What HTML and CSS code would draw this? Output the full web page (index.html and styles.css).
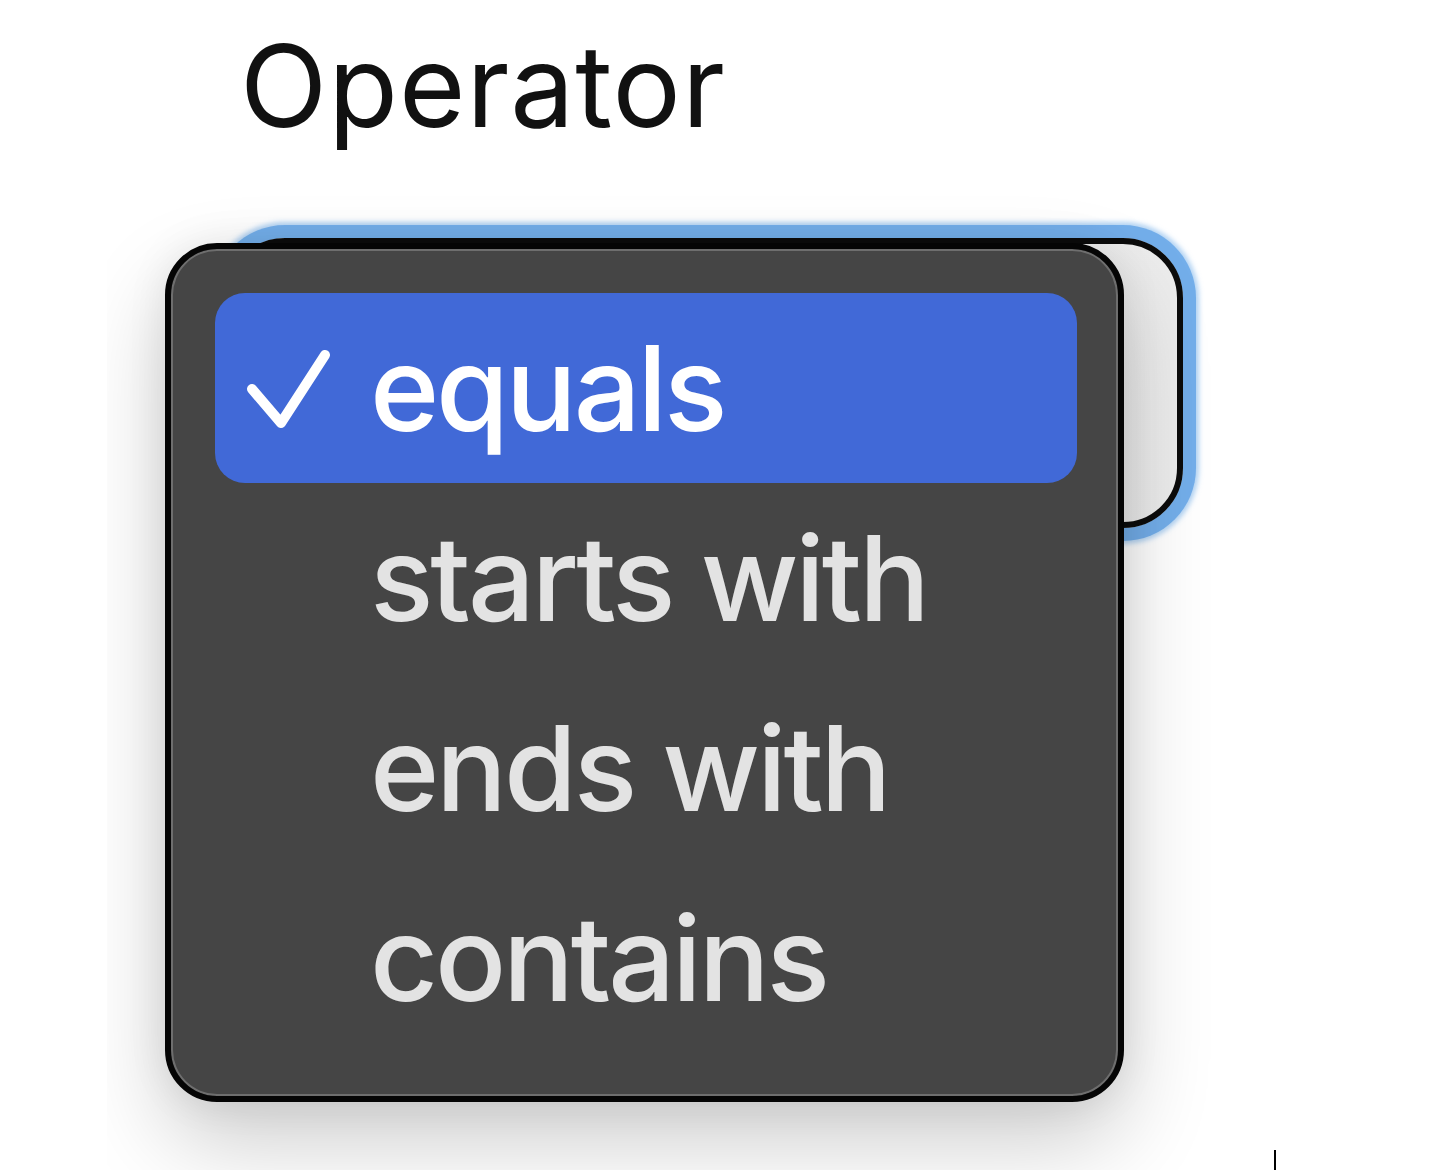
FILE: index.html
```html
<!DOCTYPE html>
<html lang="en">
<head>
  <meta charset="UTF-8">
  <meta name="viewport" content="width=device-width, initial-scale=1.0">
  <title>Operator</title>
  <link rel="stylesheet" href="styles.css">
</head>
<body>
  <div class="frame">
    <label class="label" for="operator">Operator</label>

    <div class="field">
      <div class="select" id="operator"></div>

      <ul class="menu">
        <li class="item active">
          <svg class="check" viewBox="0 0 86 80" width="86" height="80">
            <path d="M7 40 L36 74 L80 6" fill="none" stroke="#fff" stroke-width="10" stroke-linecap="round" stroke-linejoin="round"/>
          </svg>
          equals
        </li>
        <li class="item">starts with</li>
        <li class="item">ends with</li>
        <li class="item">contains</li>
      </ul>
    </div>
  </div>
  <span class="caret"></span>
</body>
</html>
```

FILE: styles.css
```css
html, body {
  margin: 0;
  height: 100%;
  overflow: hidden;
  background: #fff;
}
body {
  position: relative;
  font-family: Inter, "Noto Sans", sans-serif;
}
.frame {
  margin-left: 107px;
  width: 1168px;
  height: 1170px;
  overflow: hidden;
  position: relative;
}
.label {
  display: block;
  margin: 29px 0 0 133px;
  font-size: 114px;
  line-height: 114px;
  color: #111;
  letter-spacing: 1px;
}
.field {
  position: relative;
  margin-top: 95px;
}
.select {
  margin-left: 118px;
  width: 958px;
  height: 290px;
  box-sizing: border-box;
  border: 6px solid #0c0c0c;
  border-radius: 60px;
  background: linear-gradient(90deg, #f4f4f4, #ececec);
  box-shadow: 0 0 0 13px #73aeea, 0 0 5px 16px rgba(115, 174, 234, 0.55);
}
.menu {
  position: absolute;
  left: 58px;
  top: 5px;
  width: 959px;
  height: 859px;
  box-sizing: border-box;
  margin: 0;
  padding: 44px 41px 43px 44px;
  list-style: none;
  background: #454545;
  border: 6px solid #050505;
  border-radius: 52px;
  box-shadow: inset 0 0 0 2px #6e6e6e, 0 40px 90px rgba(0, 0, 0, 0.2), 0 0 40px rgba(0, 0, 0, 0.08);
}
.item {
  position: relative;
  height: 190px;
  line-height: 190px;
  padding-left: 155px;
  border-radius: 30px;
  font-size: 118px;
  font-weight: 500;
  letter-spacing: -3.2px;
  color: #e3e3e3;
  white-space: nowrap;
}
.item.active {
  background: #4169d7;
  color: #fff;
}
.check {
  position: absolute;
  left: 30px;
  top: 56px;
}
.caret {
  position: absolute;
  left: 1274px;
  top: 1150px;
  width: 2px;
  height: 20px;
  background: #000;
}
```
